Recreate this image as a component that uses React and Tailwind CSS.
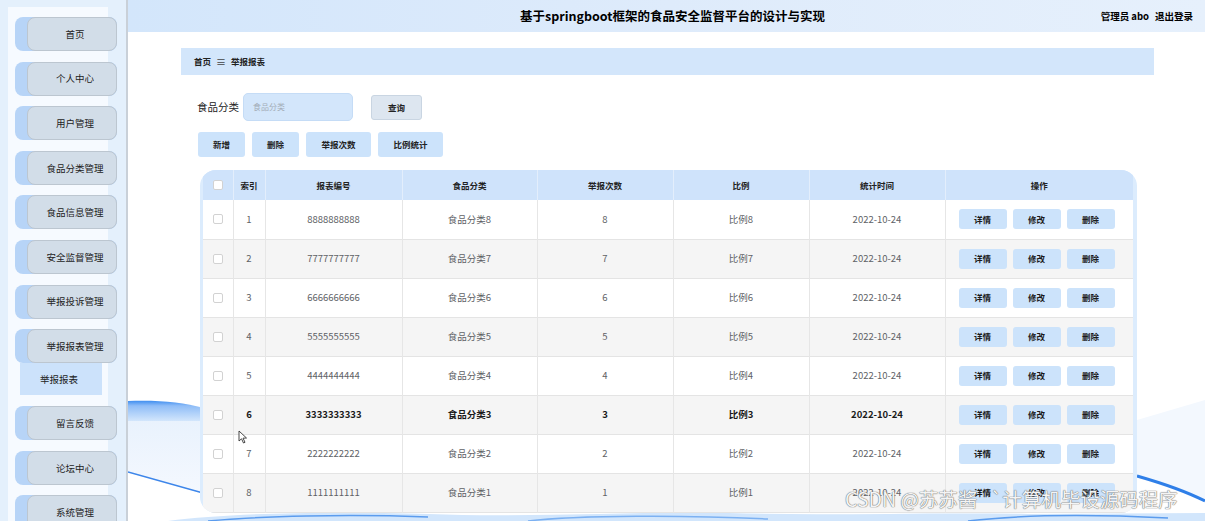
import React from "react";

const menu = ["首页", "个人中心", "用户管理", "食品分类管理", "食品信息管理", "安全监督管理", "举报投诉管理", "举报报表管理"];
const menu2 = ["留言反馈", "论坛中心", "系统管理"];

const rows = [8, 7, 6, 5, 4, 3, 2, 1].map((n, i) => ({
  idx: i + 1,
  code: String(n).repeat(10),
  cat: "食品分类" + n,
  count: n,
  ratio: "比例" + n,
  date: "2022-10-24",
}));

const cols = [30, 32, 137, 135, 136, 136, 136, 188];

function MenuItem({ label }) {
  return (
    <div className="ml-[15px] w-[102px] h-[34px] bg-[#b7d4f7] rounded-[8px] flex justify-end shrink-0">
      <div className="w-[90px] h-full bg-[#d2dde8] border border-[#bcc6d0] rounded-[8px] flex items-center justify-center pl-[6px] text-[9.5px] text-[#222]">
        {label}
      </div>
    </div>
  );
}

function Checkbox() {
  return <div className="w-[10px] h-[10px] border border-[#d2d2d2] bg-white rounded-[2px] mx-auto" />;
}

export default function App() {
  return (
    <div
      className="w-[1205px] h-[521px] overflow-hidden flex bg-white relative"
      style={{ fontFamily: '"Noto Sans CJK SC", "Noto Sans", sans-serif' }}
    >
      {/* Sidebar */}
      <div className="w-[128px] h-full bg-[#e4f0fc] border-r-2 border-[#c9d0d8] relative shrink-0">
        <div className="absolute left-[8px] top-[7px] w-[100px] h-full bg-[#f6faff]" />
        <div className="relative flex flex-col pt-[17px] gap-y-[10.6px]">
          {menu.map((m) => (
            <MenuItem key={m} label={m} />
          ))}
        </div>
        <div className="relative ml-[20px] w-[82px] h-[32px] bg-[#cce2fb] flex items-center justify-center text-[9.5px] text-[#222] pr-[4px]">
          举报报表
        </div>
        <div className="relative flex flex-col pt-[11px] gap-y-[10.6px]">
          {menu2.map((m) => (
            <MenuItem key={m} label={m} />
          ))}
        </div>
      </div>

      {/* Main */}
      <div className="flex-1 h-full relative flex flex-col">
        {/* background waves */}
        <svg className="absolute left-0 top-0 w-full h-full pointer-events-none" viewBox="0 0 1077 521" preserveAspectRatio="none">
          <defs>
            <linearGradient id="band" x1="0" y1="0" x2="0" y2="1">
              <stop offset="0" stopColor="#3f8ef0" />
              <stop offset="0.25" stopColor="#8fbdf7" />
              <stop offset="1" stopColor="#d3e6fc" />
            </linearGradient>
            <linearGradient id="fade" x1="0" y1="0" x2="0" y2="1">
              <stop offset="0" stopColor="#e9f2fd" />
              <stop offset="1" stopColor="#f4f8fe" />
            </linearGradient>
          </defs>
          <path d="M0 401 C 30 400, 55 402, 75 408 L 75 421 L 0 421 Z" fill="url(#band)" />
          <path d="M0 421 L 75 421 L 75 492 L 0 472 Z" fill="url(#fade)" />
          <path d="M0 472 L 75 493" stroke="#3d86ea" strokeWidth="1.5" fill="none" />
          <path d="M1009 420 L 1077 400 L 1077 500 L 1009 476 Z" fill="#f3f8fe" />
          <path d="M1009 476 C 1030 482, 1055 490, 1077 501" stroke="#2f7fe8" strokeWidth="3" fill="none" />
          <path d="M40 521 C 100 513, 200 511, 300 514 C 400 518, 500 511, 600 513 C 700 516, 800 512, 900 514 L 1077 513 L 1077 521 Z" fill="#d2e6fc" />
          <path d="M80 521 C 130 516, 220 514, 300 517" stroke="#5b9cee" strokeWidth="1.5" fill="none" />
          <path d="M400 521 C 450 515, 560 515, 640 519" stroke="#7cb1f2" strokeWidth="1.5" fill="none" />
          <path d="M840 521 C 890 515, 960 514, 1040 518" stroke="#5b9cee" strokeWidth="1.5" fill="none" />
        </svg>

        {/* Header */}
        <div className="relative h-[32px] shrink-0 bg-gradient-to-r from-[#d3e6fb] via-[#deebfb] to-[#e6f0fc] flex items-center">
          <div className="absolute left-0 right-0 top-0 h-full flex items-center justify-center pl-[12px] text-[12.5px] font-bold text-black">
            基于springboot框架的食品安全监督平台的设计与实现
          </div>
          <div className="ml-auto mr-[12px] relative text-[9.5px] font-bold text-black flex gap-[6px]">
            <span>管理员 abo</span>
            <span>退出登录</span>
          </div>
        </div>

        {/* Breadcrumb */}
        <div className="relative mt-[16px] ml-[53px] w-[973px] h-[27px] bg-[#d3e6fb] flex items-center pl-[13px] text-[8.5px] font-bold text-[#222] gap-[5px]">
          <span>首页</span>
          <span className="font-normal text-[#444] text-[10px]">≡</span>
          <span>举报报表</span>
        </div>

        {/* Search */}
        <div className="relative mt-[18px] ml-[69px] flex items-center h-[28px]">
          <span className="text-[10.5px] text-[#222] mr-[4px]">食品分类</span>
          <div className="w-[110px] h-[28px] bg-[#d3e6fb] rounded-[5px] border border-[#c5dcf6] flex items-center pl-[9px] text-[8px] text-[#a3adb8]">
            食品分类
          </div>
          <div className="ml-[18px] w-[51px] h-[25px] bg-[#dde6f0] border border-[#c9d5e2] rounded-[3px] flex items-center justify-center text-[8.5px] font-bold text-[#222]">
            查询
          </div>
        </div>

        {/* Buttons */}
        <div className="relative mt-[11px] ml-[70px] flex gap-[7px] h-[25px]">
          {[
            ["新增", 47],
            ["删除", 47],
            ["举报次数", 65],
            ["比例统计", 65],
          ].map(([t, w]) => (
            <div
              key={t}
              className="h-[25px] bg-[#cce3fb] rounded-[3px] flex items-center justify-center text-[8.5px] font-bold text-[#222]"
              style={{ width: w }}
            >
              {t}
            </div>
          ))}
        </div>

        {/* Table */}
        <div className="relative mt-[13px] ml-[72px] w-[937px] h-[343px] bg-[#dcecfd] rounded-[16px] pl-[3px] pr-[4px] pb-[1px] overflow-hidden">
          <table className="border-collapse table-fixed w-[930px]">
            <colgroup>
              {cols.map((w, i) => (
                <col key={i} style={{ width: w }} />
              ))}
            </colgroup>
            <thead>
              <tr className="h-[30px] bg-[#cfe3fb] text-[8.5px] font-bold text-[#222]">
                <th className="border-r border-[#e3eefc] font-bold"><Checkbox /></th>
                {["索引", "报表编号", "食品分类", "举报次数", "比例", "统计时间", "操作"].map((h, i) => (
                  <th key={h} className={"font-bold " + (i < 6 ? "border-r border-[#e3eefc]" : "")}>
                    {h}
                  </th>
                ))}
              </tr>
            </thead>
            <tbody>
              {rows.map((r, i) => {
                const bold = r.idx === 6;
                return (
                  <tr
                    key={r.idx}
                    className={
                      "h-[39px] text-[9.5px] text-center border-b border-[#e4e4e4] " +
                      (i % 2 === 0 ? "bg-white " : "bg-[#f5f5f5] ") +
                      (bold ? "font-bold text-[#1a1a1a]" : "text-[#606266]")
                    }
                  >
                    <td className="border-r border-[#e6e6e6]"><Checkbox /></td>
                    <td className="border-r border-[#e6e6e6]">{r.idx}</td>
                    <td className="border-r border-[#e6e6e6]">{r.code}</td>
                    <td className="border-r border-[#e6e6e6]">{r.cat}</td>
                    <td className="border-r border-[#e6e6e6]">{r.count}</td>
                    <td className="border-r border-[#e6e6e6]">{r.ratio}</td>
                    <td className="border-r border-[#e6e6e6]">{r.date}</td>
                    <td>
                      <div className="flex gap-[6px] pl-[13px]">
                        {["详情", "修改", "删除"].map((b) => (
                          <div
                            key={b}
                            className="w-[48px] h-[20px] bg-[#cce3fb] rounded-[3px] flex items-center justify-center text-[8.5px] font-bold text-[#1a1a1a]"
                          >
                            {b}
                          </div>
                        ))}
                      </div>
                    </td>
                  </tr>
                );
              })}
            </tbody>
          </table>
        </div>

        {/* cursor */}
        <svg className="absolute left-[110px] top-[430px]" width="10" height="14" viewBox="0 0 10 14">
          <path d="M1 1 L1 11 L3.5 8.8 L5.5 13 L7 12.3 L5 8.2 L8.5 8 Z" fill="white" stroke="#333" strokeWidth="0.9" strokeLinejoin="round" />
        </svg>
      </div>

      {/* watermark */}
      <div className="absolute left-[845px] top-[484px] text-[19.5px] whitespace-nowrap text-[#f4f4f4] [text-shadow:0_0_1px_#666,0_0_1px_#666]">
        CSDN @苏苏酱&nbsp;&nbsp;&nbsp;`计算机毕设源码程序
      </div>
    </div>
  );
}
